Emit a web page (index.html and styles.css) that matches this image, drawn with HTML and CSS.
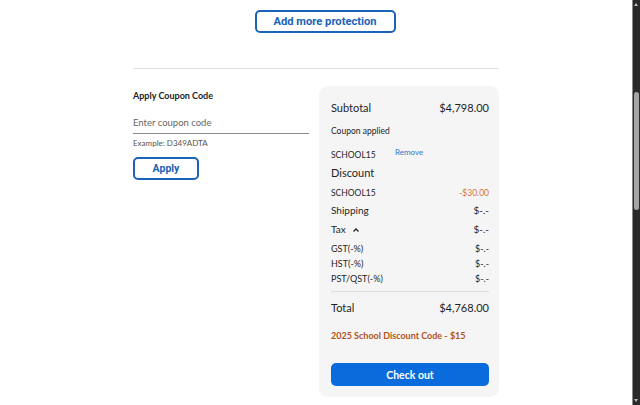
FILE: index.html
```html
<!DOCTYPE html>
<html>
<head>
<meta charset="utf-8">
<link rel="stylesheet" href="styles.css">
</head>
<body>
<div class="page">
  <div class="top">
    <button class="btn-outline btn-protect">Add more protection</button>
  </div>
  <div class="wrap">
    <hr class="divider">
    <div class="main">
      <div class="coupon">
        <div class="coupon-title">Apply Coupon Code</div>
        <div class="coupon-input">Enter coupon code</div>
        <div class="coupon-hint">Example: D349ADTA</div>
        <button class="btn-outline btn-apply">Apply</button>
      </div>
      <div class="card">
        <div class="row big first"><span>Subtotal</span><span>$4,798.00</span></div>
        <div class="row small applied"><span>Coupon applied</span></div>
        <div class="row small code"><span class="code-name">SCHOOL15</span><span class="remove">Remove</span></div>
        <div class="row big discount"><span>Discount</span></div>
        <div class="row small disc"><span>SCHOOL15</span><span class="orange">-$30.00</span></div>
        <div class="row mid ship"><span>Shipping</span><span>$-.-</span></div>
        <div class="row mid tax"><span>Tax <svg class="caret" width="8" height="6" viewBox="0 0 8 6"><path d="M1.5 4.5 L4 2 L6.5 4.5" fill="none" stroke="#222" stroke-width="1.3"/></svg></span><span>$-.-</span></div>
        <div class="row sub gst"><span>GST(-%)</span><span>$-.-</span></div>
        <div class="row sub"><span>HST(-%)</span><span>$-.-</span></div>
        <div class="row sub"><span>PST/QST(-%)</span><span>$-.-</span></div>
        <hr class="card-line">
        <div class="row big total"><span>Total</span><span>$4,768.00</span></div>
        <div class="promo">2025 School Discount Code - $15</div>
        <button class="checkout">Check out</button>
      </div>
    </div>
  </div>
</div>
<div class="scrollbar">
  <div class="arrow-up"></div>
  <div class="thumb"></div>
  <div class="arrow-down"></div>
</div>
</body>
</html>
```

FILE: styles.css
```css
* { box-sizing: border-box; }
html, body { margin: 0; padding: 0; background: #fff; }
body {
  font-family: Lato, "Noto Sans", sans-serif;
  color: #1f1f1f;
  width: 632px;
  height: 405px;
  overflow: hidden;
}
.top {
  display: flex;
  justify-content: center;
  padding-top: 10px;
  padding-left: 18px;
}
.btn-outline {
  background: #fff;
  border: 2px solid #1a63b8;
  border-radius: 5px;
  color: #1a63b8;
  font-family: Roboto, sans-serif;
  font-weight: 700;
  cursor: pointer;
  padding: 0;
}
.btn-protect {
  width: 141px;
  height: 23px;
  font-size: 11.2px;
}
.wrap {
  width: 366px;
  margin: 0 auto;
}
.divider {
  border: none;
  border-top: 1px solid #e3e3e3;
  margin: 35px 0 0;
}
.main {
  display: flex;
  gap: 10px;
  margin-top: 17px;
}
.coupon {
  width: 176px;
  display: flex;
  flex-direction: column;
  padding-top: 4px;
}
.coupon-title {
  font-size: 9px;
  font-weight: 700;
  color: #222;
  line-height: 12px;
}
.coupon-input {
  margin-top: 15px;
  font-size: 9.5px;
  color: #666;
  line-height: 12px;
  padding-bottom: 4px;
  border-bottom: 1px solid #8a8a8a;
}
.coupon-hint {
  margin-top: 4px;
  font-size: 8px;
  color: #555;
  line-height: 10px;
}
.btn-apply {
  margin-top: 9px;
  width: 66px;
  height: 23px;
  font-size: 10.5px;
}
.card {
  width: 180px;
  height: 311px;
  background: #f5f5f5;
  border-radius: 9px;
  padding: 15px 10px 0 12px;
  display: flex;
  flex-direction: column;
}
.row {
  display: flex;
  justify-content: space-between;
  align-items: center;
}
.big { font-size: 11px; line-height: 14px; }
.mid { font-size: 10px; line-height: 13px; }
.small { font-size: 8.5px; line-height: 11px; }
.sub { font-size: 9px; line-height: 12px; margin-top: 3px; }
.applied { margin-top: 11px; }
.code { margin-top: 13px; justify-content: flex-start; }
.code-name { width: 64px; }
.remove { color: #2f76c8; font-size: 8px; position: relative; top: -3px; }
.discount { margin-top: 5px; }
.disc { margin-top: 8px; }
.orange { color: #cf7446; }
.ship { margin-top: 5px; }
.tax { margin-top: 6px; }
.caret { margin-left: 4px; vertical-align: middle; }
.gst { margin-top: 7px; }
.card-line {
  border: none;
  border-top: 1px solid #dedede;
  margin: 6px 0 0;
  width: 100%;
}
.total { margin-top: 9px; }
.promo {
  margin-top: 15px;
  color: #b0531c;
  font-size: 9px;
  font-weight: 700;
  line-height: 12px;
}
.checkout {
  margin-top: 21px;
  width: 158px;
  height: 23px;
  background: #0a6cdc;
  color: #fff;
  border: none;
  border-radius: 5px;
  font-family: Lato, sans-serif;
  font-weight: 700;
  font-size: 10.5px;
  padding: 0;
}
.scrollbar {
  position: fixed;
  top: 0;
  right: 0;
  width: 8px;
  height: 405px;
  background: #2a2a2a;
  border-left: 1px solid #8a8a8a;
}
.thumb {
  position: absolute;
  top: 92px;
  left: 1px;
  width: 5px;
  height: 118px;
  background: #a5a5a5;
  border-radius: 3px;
}
.arrow-up, .arrow-down {
  position: absolute;
  left: 1px;
  width: 0; height: 0;
  border-left: 2.5px solid transparent;
  border-right: 2.5px solid transparent;
}
.arrow-up { top: 3px; border-bottom: 3px solid #bbb; }
.arrow-down { bottom: 3px; border-top: 3px solid #bbb; }
```
